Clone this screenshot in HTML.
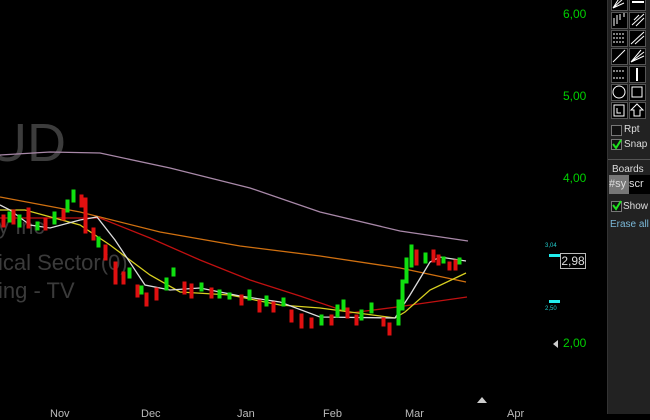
<!DOCTYPE html>
<html><head><style>
body{margin:0;width:650px;height:414px;background:#000;overflow:hidden;font-family:"Liberation Sans",sans-serif;position:relative}
.t{position:absolute;color:#3b3b3b;white-space:nowrap}
.p{position:absolute;color:#00d000;font-size:12px}
.d{position:absolute;top:408px;color:#bbb;font-size:11px}
#panel{position:absolute;left:607px;top:0;width:43px;height:414px;background:#222;border-left:1px solid #333}
.ic{position:absolute;width:15px;height:15px;background:#000;border:1px solid #555}
.lb{position:absolute;font-size:10px;color:#ddd}
.cb{position:absolute;width:9px;height:9px;border:1px solid #777;background:#111}
</style></head><body>
<div class="t" style="left:-12px;top:112px;font-size:54px;color:#3c3c3c">UD</div>
<div class="t" style="left:-2px;top:214px;font-size:22px">y Inc</div>
<div class="t" style="left:-2px;top:250px;font-size:22px">ical Sector(0)</div>
<div class="t" style="left:-2px;top:278px;font-size:22px">ing - TV</div>
<div class="p" style="left:563px;top:7px">6,00</div>
<div class="p" style="left:563px;top:89px">5,00</div>
<div class="p" style="left:563px;top:171px">4,00</div>
<div class="p" style="left:563px;top:336px">2,00</div>
<div style="position:absolute;left:553px;top:340px;width:0;height:0;border-top:4px solid transparent;border-bottom:4px solid transparent;border-right:5px solid #ccc"></div>
<div style="position:absolute;left:545px;top:243px;font-size:6px;color:#2cc">3,04</div>
<div style="position:absolute;left:545px;top:306px;font-size:6px;color:#2cc">2,50</div>
<div style="position:absolute;left:549px;top:254px;width:11px;height:3px;background:#2ee"></div>
<div style="position:absolute;left:549px;top:300px;width:11px;height:3px;background:#2ee"></div>
<div style="position:absolute;left:560px;top:253px;width:24px;height:14px;border:1px solid #bbb;color:#ddd;font-size:12px;line-height:14px;text-align:center">2,98</div>
<div style="position:absolute;left:477px;top:397px;width:0;height:0;border-left:5px solid transparent;border-right:5px solid transparent;border-bottom:6px solid #ccc"></div>
<div class="d" style="left:50px">Nov</div><div class="d" style="left:141px">Dec</div><div class="d" style="left:237px">Jan</div><div class="d" style="left:323px">Feb</div><div class="d" style="left:405px">Mar</div><div class="d" style="left:507px">Apr</div>
<svg width="607" height="414" style="position:absolute;left:0;top:0" fill="none" stroke-width="1.3">
<polyline stroke="#a888a8" points="0,155 50,152 100,153 170,168 250,188 320,212 400,231 468,241"/>
<polyline stroke="#d07010" points="0,197 80,212 160,232 240,246 320,256 400,268 466,282"/>
<polyline stroke="#c01010" points="0,218 100,218 150,238 200,260 250,280 300,296 350,313 397,307 467,297"/>
<polyline stroke="#d8d020" points="0,210 25,210 80,225 110,245 150,275 180,292 230,295 280,305 320,308 395,318 405,312 430,290 466,273"/>
<polyline stroke="#dddddd" points="0,205 10,210 30,225 50,228 80,220 97,217 115,240 145,285 170,290 200,288 240,296 280,302 320,317 395,318 410,295 430,262 440,257 466,261"/>
<g stroke-width="1">
<g stroke="#e01010" fill="#e01010">
<rect x="2" y="215" width="3" height="12"/><rect x="12" y="210" width="3" height="14"/><rect x="27" y="208" width="3" height="20"/><rect x="44" y="218" width="3" height="12"/><rect x="62" y="210" width="3" height="10"/><rect x="80" y="195" width="3" height="12"/><rect x="84" y="198" width="3" height="35"/><rect x="92" y="228" width="3" height="12"/><rect x="104" y="245" width="3" height="15"/><rect x="114" y="262" width="3" height="22"/><rect x="122" y="272" width="3" height="12"/><rect x="136" y="285" width="3" height="12"/><rect x="145" y="293" width="3" height="13"/><rect x="155" y="288" width="3" height="12"/><rect x="183" y="282" width="3" height="12"/><rect x="190" y="284" width="3" height="14"/><rect x="210" y="288" width="3" height="10"/><rect x="240" y="295" width="3" height="10"/><rect x="258" y="300" width="3" height="12"/><rect x="272" y="302" width="3" height="10"/><rect x="290" y="310" width="3" height="12"/><rect x="300" y="314" width="3" height="14"/><rect x="310" y="318" width="3" height="10"/><rect x="330" y="315" width="3" height="10"/><rect x="346" y="308" width="3" height="10"/><rect x="355" y="315" width="3" height="10"/><rect x="382" y="318" width="3" height="8"/><rect x="388" y="323" width="3" height="12"/><rect x="415" y="250" width="3" height="15"/><rect x="432" y="250" width="3" height="12"/><rect x="437" y="255" width="3" height="10"/><rect x="448" y="262" width="3" height="8"/><rect x="454" y="260" width="3" height="10"/>
</g>
<g stroke="#10e010" fill="#10e010">
<rect x="8" y="212" width="3" height="10"/><rect x="18" y="215" width="3" height="12"/><rect x="36" y="222" width="3" height="8"/><rect x="53" y="212" width="3" height="12"/><rect x="66" y="200" width="3" height="12"/><rect x="72" y="190" width="3" height="12"/><rect x="97" y="237" width="3" height="10"/><rect x="128" y="268" width="3" height="10"/><rect x="140" y="286" width="3" height="8"/><rect x="165" y="278" width="3" height="12"/><rect x="172" y="268" width="3" height="8"/><rect x="200" y="283" width="3" height="8"/><rect x="218" y="290" width="3" height="8"/><rect x="228" y="293" width="3" height="6"/><rect x="248" y="290" width="3" height="10"/><rect x="265" y="296" width="3" height="10"/><rect x="282" y="298" width="3" height="8"/><rect x="320" y="315" width="3" height="10"/><rect x="336" y="305" width="3" height="12"/><rect x="342" y="300" width="3" height="10"/><rect x="360" y="310" width="3" height="10"/><rect x="370" y="303" width="3" height="10"/><rect x="397" y="300" width="3" height="25"/><rect x="401" y="280" width="3" height="30"/><rect x="405" y="258" width="3" height="25"/><rect x="410" y="245" width="3" height="22"/><rect x="424" y="253" width="3" height="10"/><rect x="442" y="257" width="3" height="6"/><rect x="458" y="258" width="3" height="6"/>
</g></g>
</svg>
<div id="panel">
<div class="ic" style="left:3px;top:-6px"></div><div class="ic" style="left:21px;top:-6px"></div>
<div class="ic" style="left:3px;top:12px"></div><div class="ic" style="left:21px;top:12px"></div>
<div class="ic" style="left:3px;top:30px"></div><div class="ic" style="left:21px;top:30px"></div>
<div class="ic" style="left:3px;top:48px"></div><div class="ic" style="left:21px;top:48px"></div>
<div class="ic" style="left:3px;top:66px"></div><div class="ic" style="left:21px;top:66px"></div>
<div class="ic" style="left:3px;top:84px"></div><div class="ic" style="left:21px;top:84px"></div>
<div class="ic" style="left:3px;top:102px"></div><div class="ic" style="left:21px;top:102px"></div>
<svg width="43" height="120" style="position:absolute;left:0;top:0" stroke="#fff" stroke-width="1" fill="none">
<path d="M5 8L16 -2M5 8L16 3M5 8L12 -3"/><path d="M24 2H36" stroke-width="2"/>
<path d="M6 26V18M9 24V15M12 20V14M16 17V13"/><path d="M24 25L36 14M28 26L36 18M26 20L31 15"/>
<path d="M5 34H17M5 38H17M5 42H17" stroke-dasharray="2 1"/><path d="M23 44L36 32M27 44L36 36"/>
<path d="M5 62L17 50"/><path d="M23 62L36 52M23 62L36 56M23 62L33 50"/>
<path d="M5 71H17M5 78H17" stroke-dasharray="2 1"/><path d="M29 68V81" stroke-width="2"/>
<circle cx="11" cy="92" r="6"/><rect x="24" y="87" width="10" height="10"/>
<path d="M6 105H16V116H6ZM9 108V113H13"/><path d="M29 104L35 110H32V116H26V110H23Z"/>
</svg>
<div class="cb" style="left:3px;top:125px"></div><div class="lb" style="left:16px;top:124px">Rpt</div>
<div class="cb" style="left:3px;top:139px"></div><div class="lb" style="left:16px;top:139px">Snap</div>
<div style="position:absolute;left:0;top:159px;width:43px;height:1px;background:#555"></div>
<div class="lb" style="left:4px;top:164px">Boards</div>
<div style="position:absolute;left:1px;top:175px;width:20px;height:19px;background:#777;color:#ddd;font-size:11px;line-height:19px">#sy</div>
<div style="position:absolute;left:21px;top:175px;width:21px;height:19px;background:#000;color:#ddd;font-size:11px;line-height:19px">scr</div>
<div class="cb" style="left:3px;top:201px"></div><div class="lb" style="left:15px;top:201px">Show</div>
<div class="lb" style="left:2px;top:219px;color:#7ab8d8">Erase all</div>
<svg width="43" height="220" style="position:absolute;left:0;top:0" stroke="#20e020" stroke-width="2" fill="none"><path d="M5 144L8 148L13 140M5 205L8 209L13 201"/></svg>
</div>
</body></html>
